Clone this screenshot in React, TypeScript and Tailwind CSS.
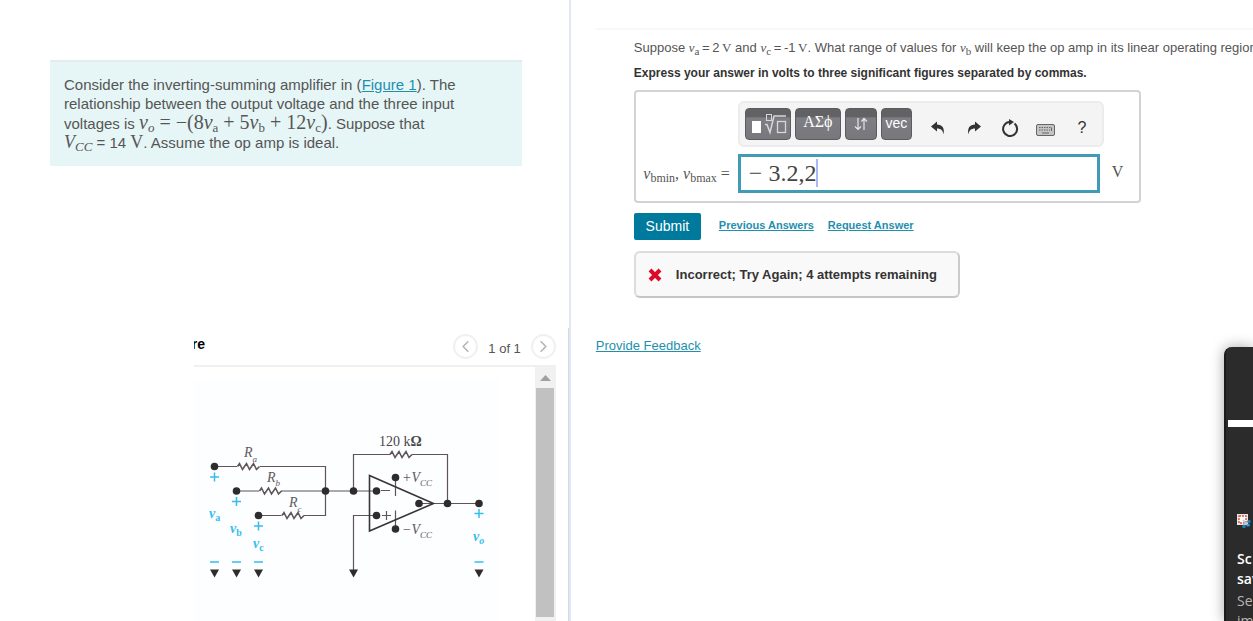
import { useState, FormEvent, ReactNode } from 'react'
import { ChevronLeft, ChevronRight } from 'lucide-react'

const INK = '#5f5557'
const CYAN = '#36bdee'

function Var({ name, sub, upright = true }: { name: string; sub: string; upright?: boolean }) {
  return (
    <span className="font-['Liberation_Serif',serif] italic">
      {name}
      <sub className={upright ? 'not-italic' : ''}>{sub}</sub>
    </span>
  )
}

function Unit({ children }: { children: ReactNode }) {
  return <span className="font-['Liberation_Serif',serif]">{children}</span>
}

const keyClass =
  'flex h-8 items-center justify-center rounded border border-[#5c5c60] bg-linear-to-b from-[#626264] from-25% via-[#7e7e84] via-30% to-[#77777c] text-white'

const toolClass = 'flex w-9 items-center justify-center'

function Toolbar() {
  return (
    <div className="flex h-[46px] items-center gap-1 rounded-md border-2 border-[#ececec] bg-[#f4f4f4] pl-[5px] text-[#333]">
      <button type="button" aria-label="Templates" className={`${keyClass} w-[46px]`}>
        <svg width="38" height="24" viewBox="0 0 38 24" fill="none" stroke="#d8d8dc" strokeWidth="1">
          <rect x="3" y="9" width="9" height="12" fill="#fff" stroke="none" />
          <rect x="17.5" y="2.5" width="5" height="6" />
          <path d="M16 12.500h2l3 8 4-16.500h12" strokeWidth="1.5" />
          <rect x="28.500" y="9.500" width="8" height="11" strokeWidth="1.3" />
        </svg>
      </button>
      <button
        type="button"
        className={`${keyClass} w-[46px] pb-1 font-['Liberation_Serif',serif] text-base`}
      >
        ΑΣϕ
      </button>
      <button type="button" aria-label="Arrows" className={`${keyClass} w-8`}>
        <svg width="14" height="14" viewBox="0 0 14 14" fill="none" stroke="#e6e6ea" strokeWidth="1.2">
          <path d="M4 1v11.500M1 9.500l3 3 3-3M10 13V1.500M7.500 4.500l2.500-3 3 3" />
        </svg>
      </button>
      <button
        type="button"
        className={`${keyClass} w-[31px] pb-0.5 font-['Liberation_Sans',sans-serif] text-sm`}
      >
        vec
      </button>
      <div className="flex items-center pt-2 pl-1">
        <button type="button" aria-label="Undo" className={toolClass}>
          <svg width="14" height="14" viewBox="0 0 14 14" fill="#333">
            <path d="M0 5.500L6 0.500v3c5 0 8 3.500 6.500 10C12 9.500 10 7.500 6 7.500v3z" />
          </svg>
        </button>
        <button type="button" aria-label="Redo" className={toolClass}>
          <svg width="14" height="14" viewBox="0 0 14 14" fill="#333">
            <path d="M14 5.500L8 0.500v3C3 3.500 0 7 1.500 13.500 2 9.500 4 7.500 8 7.500v3z" />
          </svg>
        </button>
        <button type="button" aria-label="Reset" className={toolClass}>
          <svg width="18" height="18" viewBox="0 0 18 18" fill="none" stroke="#333" strokeWidth="2">
            <path d="M13.500 4.500A7 7 0 1 1 8.500 3" />
            <path d="M8 0l5 3-5 3.500z" fill="#333" stroke="none" />
          </svg>
        </button>
        <button type="button" aria-label="Keyboard" className={`${toolClass} pt-1`}>
          <svg width="19" height="12" viewBox="0 0 19 12" fill="none" stroke="#666">
            <rect x="0.500" y="0.500" width="18" height="11" rx="1.500" fill="#c4c4c4" />
            <path d="M3 3.500h13M3 6h11" strokeDasharray="1.500 1" />
            <path d="M6 9h7M15.500 4v3" />
          </svg>
        </button>
        <button type="button" className={`${toolClass} font-['Liberation_Sans',sans-serif] text-base`}>
          ?
        </button>
      </div>
    </div>
  )
}

function Resistor({ x, y }: { x: number; y: number }) {
  return (
    <path
      d={`M${x} ${y}l2-3 3 6 4-6 3 6 4-6 3 6 3-3`}
      fill="none"
      stroke={INK}
      strokeWidth="1.6"
    />
  )
}

function Circuit() {
  const nodes = [
    [214.5, 466.5],
    [236.5, 491],
    [258.5, 515.5],
    [325.5, 491],
    [353.5, 491],
    [376.5, 491],
    [376.5, 515.5],
    [395.5, 477.5],
    [395.5, 529],
    [419, 503.5],
    [447.5, 503.5],
    [479, 503.5],
  ]
  const grounds = [214.5, 236.5, 258.5, 353.5, 479]
  const pluses = [
    [214.5, 477],
    [236.5, 501.5],
    [258.5, 526],
    [479, 513.5],
  ]
  const minuses = [214.5, 236.5, 258.5, 479]

  return (
    <svg
      width="306"
      height="242"
      viewBox="194 379 306 242"
      className="block bg-[#fcfeff]"
      fontFamily="'Liberation Serif', serif"
      role="img"
      aria-label="Inverting-summing amplifier circuit"
    >
      <g fill="none" stroke={INK} strokeWidth="1.2">
        <path d="M214.5 466.5H237M260 466.5h65.500v49H304M236.500 491H259M281 491h95.500M258.500 515.500H281.500" />
        <path d="M353.500 491V454.500H390M412 454.500h35.500v49M419 503.500h60M376.500 515.500h-23V572" />
        <path d="M395.500 477.500V496M395.500 510.500V529" />
        <path d="M369.500 475.500L433.500 503.500 369.500 531z" strokeWidth="1.600" stroke="#3a3436" />
        <path d="M381 490.500h9M382 515.500h9M386.500 511v9" />
      </g>
      <Resistor x={237.5} y={466.5} />
      <Resistor x={259.5} y={491} />
      <Resistor x={282} y={515.5} />
      <Resistor x={390} y={454.5} />

      {nodes.map(([x, y]) => (
        <circle key={`${x}-${y}`} cx={x} cy={y} r="3.800" fill="#2f2c2d" />
      ))}
      {grounds.map((x) => (
        <path key={x} d={`M${x - 4.5} 569.500h9l-4.500 8z`} fill="#2f2c2d" />
      ))}
      <g stroke={CYAN} strokeWidth="1.500">
        {pluses.map(([x, y]) => (
          <path key={x} d={`M${x - 4.5} ${y}h9M${x} ${y - 4.5}v9`} />
        ))}
        {minuses.map((x) => (
          <path key={x} d={`M${x - 4.5} 562h9`} />
        ))}
      </g>

      <g fill="#625a5c" fontStyle="italic" fontSize="14">
        <text x="244" y="457">R<tspan dy="5" fontSize="9">a</tspan></text>
        <text x="267" y="482">R<tspan dy="4" fontSize="9">b</tspan></text>
        <text x="289" y="507">R<tspan dy="5" fontSize="9">c</tspan></text>
        <text x="402" y="482">+V<tspan dy="4" fontSize="9">CC</tspan></text>
        <text x="402" y="534">−V<tspan dy="4" fontSize="9">CC</tspan></text>
      </g>
      <text x="379" y="446" fontSize="14" fill="#4d4648">
        120 k<tspan fontWeight="bold">Ω</tspan>
      </text>
      <g fill={CYAN} fontWeight="bold" fontSize="14">
        <text x="209" y="518"><tspan fontStyle="italic">v</tspan><tspan dy="3" fontSize="10">a</tspan></text>
        <text x="230" y="533"><tspan fontStyle="italic">v</tspan><tspan dy="3" fontSize="10">b</tspan></text>
        <text x="253" y="548"><tspan fontStyle="italic">v</tspan><tspan dy="3" fontSize="10">c</tspan></text>
        <text x="473" y="541" fontStyle="italic">v<tspan dy="3" fontSize="10">o</tspan></text>
      </g>
    </svg>
  )
}

function FigurePanel() {
  const pagerClass =
    'flex size-[25px] items-center justify-center rounded-full border-2 border-[#f0f0f0] text-[#b4b4b4]'

  return (
    <section
      id="figure"
      className="mt-[162px] ml-[194px] flex flex-1 flex-col border-r border-[#cfdde8] pr-3"
    >
      <header className="flex h-[39px] items-center justify-between border-b-2 border-[#f0f0f0]">
        <h2 className="flex w-[11px] justify-end overflow-hidden pb-1.5 text-sm font-bold text-black">
          Figure
        </h2>
        <div className="flex items-center gap-2.5 text-[#555]">
          <button type="button" aria-label="Previous figure" className={pagerClass}>
            <ChevronLeft size={19} />
          </button>
          <span className="pt-1 text-[13px]">1 of 1</span>
          <button type="button" aria-label="Next figure" className={pagerClass}>
            <ChevronRight size={19} />
          </button>
        </div>
      </header>
      <div className="flex flex-1 justify-between">
        <div className="pt-3">
          <Circuit />
        </div>
        <div className="flex w-[21px] flex-col items-center bg-[#f1f1f1] pb-1">
          <div className="flex h-[21px] items-center">
            <svg width="11" height="6" viewBox="0 0 11 6" fill="#a0a0a0">
              <path d="M0 6L5.500 0 11 6z" />
            </svg>
          </div>
          <div className="w-[18px] flex-1 bg-[#c1c1c1]" />
        </div>
      </div>
    </section>
  )
}

function Notification() {
  return (
    <div className="absolute top-[347px] right-0 bottom-0 w-[29px] overflow-hidden rounded-tl-lg border-l-2 border-[#1c1c1c] bg-[#2b2b2b] pl-0.5 font-['Open_Sans',sans-serif] text-sm leading-5 whitespace-nowrap text-white shadow-[0_0_14px_rgba(0,0,0,0.35)]">
      <div className="mt-[73px] h-[7px] bg-white" />
      <div className="mt-[87px] pl-[9px]">
        <svg width="14" height="15" viewBox="0 0 14 15">
          <rect x="0" y="0" width="11" height="11" fill="#e8e8ea" />
          <rect x="2" y="2" width="7" height="7" fill="#fff" stroke="#e0533c" strokeWidth="1.500" strokeDasharray="2 1" />
          <path d="M6 6l5 6M12 7l-6 4" stroke="#b9c6d0" strokeWidth="1.500" />
          <circle cx="12" cy="7.500" r="1.700" fill="#1e7fc0" />
          <circle cx="7" cy="12.500" r="1.800" fill="#1e7fc0" />
          <circle cx="11.500" cy="11" r="1.500" fill="#2f95d6" />
        </svg>
        <p className="mt-5 font-semibold">Sc</p>
        <p className="font-semibold">sav</p>
        <p className="mt-0.5 text-[#b5b5b5]">Se</p>
        <p className="text-[#b5b5b5]">im</p>
      </div>
    </div>
  )
}

export default function App() {
  const [answer, setAnswer] = useState('− 3.2,2')

  function handleSubmit(e: FormEvent) {
    e.preventDefault()
  }

  return (
    <div className="relative flex h-screen overflow-hidden bg-white font-['Liberation_Sans',Arial,sans-serif] text-[#555]">
      {/* Problem statement and figure */}
      <div className="flex w-[45.4%] shrink-0 flex-col pt-[60px]">
        <div className="mr-[47px] ml-[50px] border-t-2 border-[#e3eded] bg-[#e6f6f6] pt-[13px] pr-12 pb-3.5 pl-3.5 text-[15px] leading-[19px] [&_sub]:text-[13px]">
          <p>
            Consider the inverting-summing amplifier in (
            <a href="#figure" className="text-[#1f8fae] underline">
              Figure 1
            </a>
            ). The relationship between the output voltage and the three input voltages is{' '}
            <span className="font-['Liberation_Serif',serif] text-xl leading-[19px] whitespace-nowrap">
              <Var name="v" sub="o" upright={false} /> = −(8
              <Var name="v" sub="a" /> + 5<Var name="v" sub="b" /> + 12
              <Var name="v" sub="c" />)
            </span>
            . Suppose that
            <br />
            <span className="text-lg leading-[19px]">
              <Var name="V" sub="CC" upright={false} />
            </span>{' '}
            = 14{' '}
            <span className="text-lg leading-[19px]">
              <Unit>V</Unit>
            </span>
            . Assume the op amp is ideal.
          </p>
        </div>
        <FigurePanel />
      </div>

      {/* Answer area */}
      <main className="min-w-0 flex-1 border-l-2 border-[#e1e8f2] pt-7 pl-[25px]">
        <div className="border-t-2 border-[#f7f7f7] pt-2 pl-[38px]">
          <p className="h-5 text-[13px] leading-5 whitespace-nowrap [&_sub]:text-[11px]">
            Suppose <Var name="v" sub="a" />&thinsp;=&thinsp;2&thinsp;<Unit>V</Unit> and{' '}
            <Var name="v" sub="c" />&thinsp;=&thinsp;-1&thinsp;<Unit>V</Unit>. What range of values
            for <Var name="v" sub="b" /> will keep the op amp in its linear operating region
          </p>
          <p className="mt-[5px] text-xs leading-5 font-bold text-[#333]">
            Express your answer in volts to three significant figures separated by commas.
          </p>

          <form onSubmit={handleSubmit}>
            <div className="mt-[7px] flex h-[113px] w-[507px] items-end rounded border-2 border-[#d3d3d3] pb-2">
              <label
                htmlFor="answer"
                className="flex h-[39px] w-[102px] items-center justify-end pr-2 font-['Liberation_Serif',serif] text-base whitespace-nowrap [&_sub]:text-xs"
              >
                <span>
                  <Var name="v" sub="bmin" />, <Var name="v" sub="bmax" /> =
                </span>
              </label>
              <div className="w-[366px]">
                <Toolbar />
                <div className="mt-[7px] mr-1 flex h-[39px] items-center border-[3px] border-[#429bb5] pb-0.5 pl-2">
                  <input
                    id="answer"
                    value={answer}
                    onChange={(e) => setAnswer(e.target.value)}
                    className="field-sizing-content font-['Liberation_Serif',serif] text-2xl text-[#444] outline-none"
                  />
                  <span className="h-7 w-0.5 bg-[#a9b9f5]" />
                </div>
              </div>
              <span className="flex h-[39px] items-center pb-1 pl-2 font-['Liberation_Serif',serif] text-base">
                V
              </span>
            </div>

            <div className="mt-2.5 flex items-center">
              <button
                type="submit"
                className="h-[27px] w-[67px] rounded-xs bg-[#007a9c] pb-0.5 text-sm text-white"
              >
                Submit
              </button>
              <a
                href="#previous"
                className="ml-[18px] pb-0.5 text-[11px] font-bold text-[#1f8fae] underline"
              >
                Previous Answers
              </a>
              <a
                href="#request"
                className="ml-3.5 pb-0.5 text-[11px] font-bold text-[#1f8fae] underline"
              >
                Request Answer
              </a>
            </div>
          </form>

          <div className="mt-[11px] flex h-[47px] w-[326px] items-center gap-3.5 rounded-md border-2 border-[#dcdcdc] border-r-[#cbcbcb] border-b-[#c6c6c6] bg-[#f9f9f9] pl-3 text-[13px] font-bold text-[#333]">
            <svg width="14" height="14" viewBox="0 0 14 14" fill="none" stroke="#dc0a28" strokeWidth="4">
              <path d="M2 2l10 10M12 2L2 12" />
            </svg>
            Incorrect; Try Again; 4 attempts remaining
          </div>
        </div>
        <a href="#feedback" className="mt-[38px] inline-block text-[13px] text-[#1f8fae] underline">
          Provide Feedback
        </a>
      </main>

      <Notification />
    </div>
  )
}
